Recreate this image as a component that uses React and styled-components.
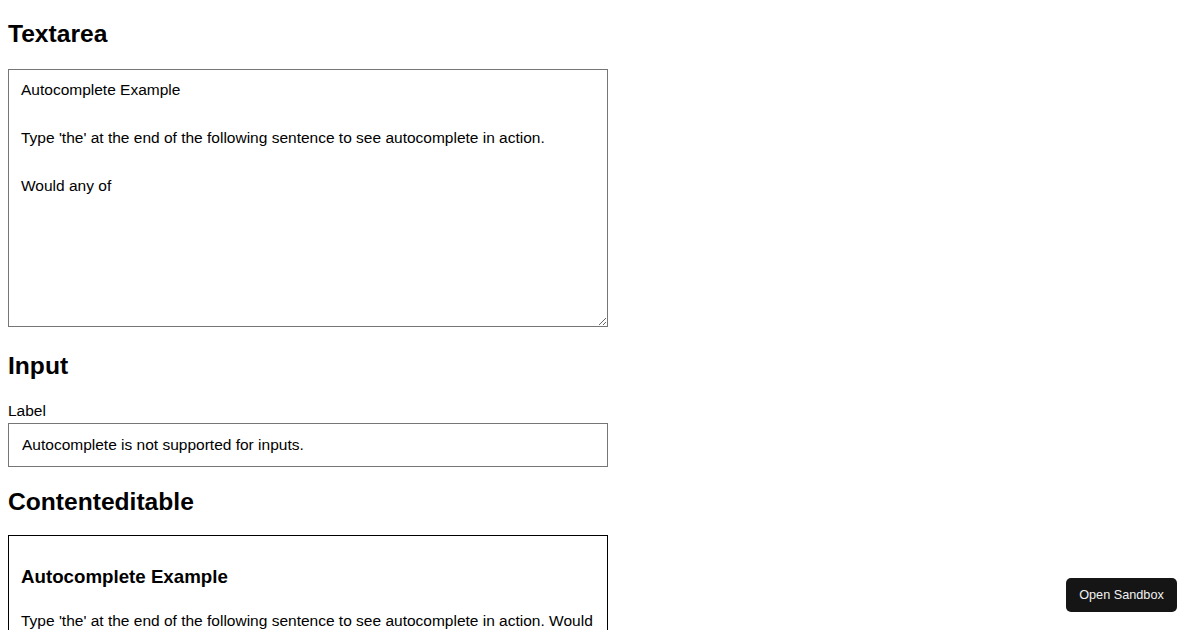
import styled, { createGlobalStyle } from "styled-components";

const GlobalStyle = createGlobalStyle`
  body {
    margin: 0;
    font-family: "Liberation Sans", Arial, sans-serif;
    color: #000;
    background: #fff;
  }
`;

const Page = styled.main`
  padding: 8px;
  width: 600px;
`;

const Heading = styled.h2`
  margin: ${(p) => p.$top}px 0 ${(p) => p.$bottom}px;
  font-size: 24.6px;
  line-height: 28px;
  font-weight: 700;
`;

const Field = styled.label`
  display: block;
  font-size: 15.5px;
`;

const LabelText = styled.span`
  display: block;
  line-height: 13px;
  margin-bottom: 6px;
`;

const TextArea = styled.textarea`
  display: block;
  box-sizing: border-box;
  width: 600px;
  height: 258px;
  margin: 0;
  padding: 8px 12px;
  border: 1px solid #767676;
  border-radius: 0;
  font-family: "Liberation Sans", Arial, sans-serif;
  font-size: 15.5px;
  line-height: 24px;
  color: #000;
  resize: both;
  outline: none;
`;

const TextInput = styled.input`
  display: block;
  box-sizing: border-box;
  width: 600px;
  height: 44px;
  margin: 0;
  padding: 0 13px;
  border: 1px solid #767676;
  border-radius: 0;
  font-family: "Liberation Sans", Arial, sans-serif;
  font-size: 15.5px;
  color: #000;
  outline: none;
`;

const Editable = styled.div`
  box-sizing: border-box;
  width: 600px;
  padding: 8px 10px 10px 12px;
  border: 1px solid #000;
  outline: none;
  line-height: 24px;

  h3 {
    margin: 18.72px 0;
    font-size: 18.72px;
    line-height: 28px;
  }
  p {
    margin: 16px 0;
    font-size: 15.5px;
  }
`;

const SandboxButton = styled.button`
  position: fixed;
  right: 23px;
  bottom: 18px;
  width: 111px;
  height: 34px;
  padding: 0;
  border: 0;
  border-radius: 5px;
  background: #151515;
  color: #f2f2f2;
  font-family: "Liberation Sans", Arial, sans-serif;
  font-size: 12.7px;
  cursor: pointer;
`;

const textareaValue =
  "Autocomplete Example\n\nType 'the' at the end of the following sentence to see autocomplete in action.\n\nWould any of";

const App = () => {
  return (
    <>
      <GlobalStyle />
      <Page>
        <Heading $top={12} $bottom={21}>
          Textarea
        </Heading>
        <TextArea defaultValue={textareaValue} />

        <Heading $top={25} $bottom={24}>
          Input
        </Heading>
        <Field>
          <LabelText>Label</LabelText>
          <TextInput defaultValue="Autocomplete is not supported for inputs." />
        </Field>

        <Heading $top={21} $bottom={19}>
          Contenteditable
        </Heading>
        <Editable contentEditable suppressContentEditableWarning>
          <h3>Autocomplete Example</h3>
          <p>
            Type 'the' at the end of the following sentence to see autocomplete
            in action. Would any of
          </p>
        </Editable>
      </Page>
      <SandboxButton>Open Sandbox</SandboxButton>
    </>
  );
};

export default App;
